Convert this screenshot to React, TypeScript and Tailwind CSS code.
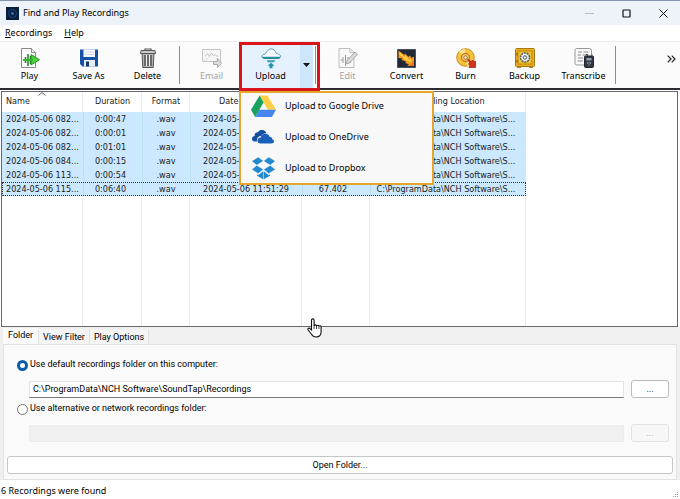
import React from 'react';

interface Recording {
  name: string;
  duration: string;
  date: string;
  size: string;
}

const recordings: Recording[] = [
  { name: '2024-05-06 082...', duration: '0:00:47', date: '2024-05-06 08:21:10', size: '7.911' },
  { name: '2024-05-06 082...', duration: '0:00:01', date: '2024-05-06 08:24:02', size: '0.168' },
  { name: '2024-05-06 082...', duration: '0:01:01', date: '2024-05-06 08:27:45', size: '10.268' },
  { name: '2024-05-06 084...', duration: '0:00:15', date: '2024-05-06 08:41:33', size: '2.525' },
  { name: '2024-05-06 113...', duration: '0:00:54', date: '2024-05-06 11:36:08', size: '9.090' },
  { name: '2024-05-06 115...', duration: '0:06:40', date: '2024-05-06 11:51:29', size: '67.402' },
];

const LOCATION = 'C:\\ProgramData\\NCH Software\\S...';

const PlayIcon = () => (
  <svg width="20" height="20" viewBox="0 0 20 20">
    <path d="M1.5.5h10l4 4v15h-14z" fill="#fff" stroke="#888" />
    <path d="M11.5.5v4h4" fill="#eee" stroke="#888" />
    <path d="M3 12h2M5.500 9v6M8 6v12M10.500 8v8" stroke="#187a1c" strokeWidth="1.500" />
    <path d="M11 6.500l8.500 5.200-8.500 5.300z" fill="#4fd13c" stroke="#188c1b" strokeWidth=".9" />
    <path d="M4 12h9" stroke="#2fb52c" strokeWidth="2" />
  </svg>
);

const SaveIcon = () => (
  <svg width="20" height="20" viewBox="0 0 20 20">
    <path d="M1 1.500h18v17H3.500L1 16z" fill="#1553a8" />
    <path d="M4.500 1.500h11.500v7.500H4.500z" fill="#fff" />
    <path d="M5.500 4h9.500M5.500 6.500h9.500" stroke="#c8d6e8" />
    <path d="M5 12h11v6.500H5z" fill="#e9eef5" />
    <path d="M7 13.500h3v5H7z" fill="#12366f" />
  </svg>
);

const DeleteIcon = () => (
  <svg width="20" height="20" viewBox="0 0 20 20">
    <path d="M7 2.500V1h6v1.500" fill="none" stroke="#555" strokeWidth="1.200" />
    <path d="M3 2.500h14l.5 3h-15z" fill="#c9c9c9" stroke="#555" />
    <path d="M4 5.500h12l-.8 14H4.800z" fill="#b5b5b5" stroke="#555" />
    <path d="M7 7v11M10 7v11M13 7v11" stroke="#4d4d4d" strokeWidth="1.400" />
    <path d="M8.500 7v11M11.500 7v11" stroke="#f1f1f1" />
  </svg>
);

const EmailIcon = () => (
  <svg width="20" height="20" viewBox="0 0 20 20" fill="none" stroke="#c4c4c4">
    <path d="M.5 1.500h18v12h-18z" fill="#f6f6f6" />
    <path d="M3 8l1-.5 1.500-2 2 3 2-3.500 2 3 1.500-1.500 1.500 1.500h1.500" />
    <path d="M2 13l5-3.500M17 13l-3-2" stroke="#d9d9d9" />
    <path d="M11.500 13.500h4v-3l4 4.800-4 4.200v-3h-4z" fill="#ddd" stroke="#aaa" />
  </svg>
);

const UploadIcon = () => (
  <svg width="22" height="21" viewBox="0 0 22 21">
    <path d="M3.500 10C2 9.800 1.300 8.500 2.300 7.400c.8-.9 2-1.300 3.200-1.500C6.600 3.400 8.800.8 11.200.8c2.500 0 4.400 2.200 5.100 4.700 1.700.3 3.200.9 4 1.900.8 1.200 0 2.400-1.500 2.600z" fill="#fbfeff" stroke="#5b9dad" />
    <path d="M2 8.800h18.500c-.4 1.400-1.400 2.200-3 2.200h-13c-1.400 0-2.300-.9-2.500-2.200z" fill="#2a8ba1" />
    <path d="M6.500 12.300h9l-1.500 2H8z" fill="#379cb0" />
    <path d="M11 14.700l3.500 3-2 .1v2.500h-3v-2.500l-2-.1z" fill="#2492aa" />
  </svg>
);

const EditIcon = () => (
  <svg width="20" height="20" viewBox="0 0 20 20" fill="none" stroke="#bdbdbd">
    <path d="M1 .5h11l4 4v15H1z" fill="#f8f8f8" />
    <path d="M12 .5v4h4" />
    <path d="M2.500 12h2M5 9v6M7.500 7v11M10 9v7M12.500 10v5" stroke="#999" />
    <path d="M9 12.500L17 4l2.500 2.200-8 8.800-3 .8z" fill="#d9d9d9" stroke="#a8a8a8" />
  </svg>
);

const ConvertIcon = () => (
  <svg width="19" height="19" viewBox="0 0 19 19">
    <path d="M.5.500h18v18H.5z" fill="#222936" stroke="#46505e" />
    <path d="M1.500 1.500l6 4.500.5-1.500 3.500 3.500 1.500-1.500 1.500 2.500L17 7.500V17h-7l2-1.500L8.500 14l.5-1.500L4.500 11l1-1.500L1.500 9z" fill="#f39a20" />
    <path d="M2.500 3l5.500 5 .5-1.500 4 4.500 1.500-1 .5 3.500-4-2-.5 1-4-3 .5-1L2.500 6z" fill="#ffcf43" />
    <path d="M17 10v7h-6l2.500-1.500L15 14z" fill="#ee7620" />
  </svg>
);

const BurnIcon = () => (
  <svg width="20" height="20" viewBox="0 0 20 20">
    <circle cx="9.500" cy="9.500" r="8.800" fill="#f5c43f" stroke="#c98b1d" />
    <path d="M9.500 9.500L3 3.500A9 9 0 0 1 9 1zM9.500 9.500l7 5.500a9 9 0 0 1-5 3z" fill="#ffe58c" />
    <circle cx="9.500" cy="9.500" r="4" fill="#f9d980" stroke="#ca7c18" strokeWidth="1.400" />
    <circle cx="9.500" cy="9.500" r="1.700" fill="#fff" stroke="#a45c10" />
    <path d="M11.500 11l3.500 2.500 1.500-1.500 1 1.500 2-.5v6.500h-6.500l1-2-1.500-1.500 1-1.500z" fill="#d4321c" stroke="#92200f" strokeWidth=".7" />
  </svg>
);

const BackupIcon = () => (
  <svg width="20" height="20" viewBox="0 0 20 20">
    <path d="M2 18h4v1.800H2zM14 18h4v1.800h-4z" fill="#8b6410" />
    <rect x=".5" y=".5" width="19" height="18" rx="1" fill="#e9ae1e" stroke="#a87810" />
    <rect x="3" y="3" width="14" height="13" fill="#f2c12f" stroke="#bb8612" />
    <circle cx="10" cy="9.500" r="4.500" fill="#e8edf0" stroke="#555d62" strokeWidth="1.500" strokeDasharray="2 .8" />
    <circle cx="10" cy="9.500" r="1.700" fill="#fff" stroke="#48525a" />
    <path d="M2 5v2.500M2 12v2.500" stroke="#735008" />
  </svg>
);

const TranscribeIcon = () => (
  <svg width="20" height="20" viewBox="0 0 20 20">
    <path d="M2.500.5h13a2 2 0 0 1 2 2V17H3a2 2 0 0 1-2-2V2.500a2 2 0 0 1 1.500-2z" fill="#fafafa" stroke="#999" />
    <path d="M4 4h4M9.500 4H14M3.500 7H7M8.500 7h6M4 10h5M3.500 13H9" stroke="#888" />
    <rect x="10.500" y="8" width="9" height="11.500" rx="1" fill="#333744" stroke="#22252e" />
    <path d="M12.500 10h5v2.500h-5z" fill="#97a1b5" />
    <path d="M13 15h1M14.500 15h1M16 15h1M14.500 17h1" stroke="#d2d6df" />
    <path d="M12 6.500h1.500V8M18 6.500V8" stroke="#444" fill="none" />
  </svg>
);

const DriveIcon = () => (
  <svg width="25" height="23" viewBox="0 0 26 23">
    <path d="M9 0h8l9 15h-8.500z" fill="#ffcf48" />
    <path d="M8.500 15H26l-4.200 7.500H4.200z" fill="#4587ef" />
    <path d="M9 0l4.100 7.300L4.200 22.500 0 15z" fill="#18a15f" />
  </svg>
);

const OneDriveIcon = () => (
  <svg width="22" height="14" viewBox="0 0 22 14">
    <path d="M5 11.500H3C.8 11.500 0 10 0 8.700c0-1.600 1.200-2.700 2.700-2.800C2.300 3.500 4 1.900 6 2.200 7 .4 8.800 0 10.300.1c2.200.2 3.600 1.600 4.200 3.200-2.300-.3-4.200.7-5.100 2.700C6.600 5.800 4.500 7.800 5 11.500z" fill="#124f9e" />
    <path d="M8.500 13.500c-1.900 0-3-1.300-3-2.800 0-1.900 1.400-3.100 3.300-3.100.3-2.300 2.100-3.900 4.500-3.900 2.100 0 3.600 1.100 4.200 3 1.700 0 2.700 1 2.700 2.500 1.200.2 1.800 1 1.800 2.100 0 1.300-.9 2.200-2.400 2.200z" fill="#1a60ba" />
  </svg>
);

const DropboxIcon = () => (
  <svg width="25" height="23" viewBox="0 0 26 24" fill="#2389ce">
    <path d="M7.500 0L13 4.300 6 8.600.6 4.300zM18.500 0L13 4.300l7 4.300 5.400-4.300zM.6 13L6 8.600l7 4.400-5.500 4.400zM25.400 13L20 8.600 13 13l5.500 4.400z" stroke="#f8f8f8" strokeWidth=".6" />
    <path d="M6.200 18.200l1.300.9 5.200-4.200v8.300l-6.500-3.700zM19.800 18.200l-1.300.9-5.200-4.200v8.300l6.500-3.700z" />
  </svg>
);

interface ToolProps {
  label: string;
  icon: React.ReactNode;
  disabled?: boolean;
  active?: boolean;
}

const Tool: React.FC<ToolProps> = ({ label, icon, disabled, active }) => (
  <button
    disabled={disabled}
    className={`flex w-[59px] shrink-0 flex-col items-center pt-1.5 leading-4 ${active ? 'bg-[#e5f2fd]' : ''} ${disabled ? 'text-[#a3a3a3]' : 'text-black'}`}
  >
    <span className="flex h-5 items-center">{icon}</span>
    <span>{label}</span>
  </button>
);

const Separator = () => <span className="mx-0.5 my-1 w-px shrink-0 bg-[#8e8e8e]" />;

const uploadTargets = [
  { label: 'Upload to Google Drive', icon: <DriveIcon /> },
  { label: 'Upload to OneDrive', icon: <OneDriveIcon /> },
  { label: 'Upload to Dropbox', icon: <DropboxIcon /> },
];

const Toolbar = () => (
  <div className="flex h-[47px] border-t border-[#ececec] bg-[#fbfbfb] text-[9px]">
    <Tool label="Play" icon={<PlayIcon />} />
    <Tool label="Save As" icon={<SaveIcon />} />
    <Tool label="Delete" icon={<DeleteIcon />} />
    <Separator />
    <Tool label="Email" icon={<EmailIcon />} disabled />
    <div className="relative flex shrink-0">
      <Tool label="Upload" icon={<UploadIcon />} active />
      <button aria-label="Upload options" className="flex w-[13px] items-center justify-center bg-[#cce6fb]">
        <svg width="7" height="4" viewBox="0 0 7 4"><path d="M0 0h7L3.500 4z" fill="#111" /></svg>
      </button>
      <div className="pointer-events-none absolute top-0 -right-[7px] -bottom-[3px] -left-0.5 z-20 border-[3px] border-[#d9141c]" />
      {/* Upload drop-down */}
      <div role="menu" className="absolute top-[49px] -left-0.5 z-10 flex w-[195px] flex-col gap-[3px] border-2 border-[#e5a62b] bg-[#f8f8f8]">
        {uploadTargets.map((target) => (
          <button key={target.label} role="menuitem" className="flex h-7 items-center gap-2 pb-0.5 pl-2 text-black">
            <span className="flex w-7 justify-center">{target.icon}</span>
            {target.label}
          </button>
        ))}
      </div>
    </div>
    <Separator />
    <Tool label="Edit" icon={<EditIcon />} disabled />
    <Tool label="Convert" icon={<ConvertIcon />} />
    <Tool label="Burn" icon={<BurnIcon />} />
    <Tool label="Backup" icon={<BackupIcon />} />
    <Tool label="Transcribe" icon={<TranscribeIcon />} />
    <Separator />
    <button aria-label="More tools" className="ml-auto flex items-center pr-1 pb-7 pt-4">
      <svg width="9" height="8" viewBox="0 0 9 8" fill="none" stroke="#222" strokeWidth="1.200"><path d="M.7.700L4 4 .7 7.300M4.700.700L8 4 4.700 7.300" /></svg>
    </button>
  </div>
);

const RecordingList = () => (
  <div className="relative ml-px mr-0.5 flex flex-1 flex-col border border-[#696969] bg-white">
    {/* column lines run down to the bottom of the list */}
    <div className="absolute inset-0 flex">
      <div className="w-[81px] border-r border-[#ececec]" />
      <div className="w-[59px] border-r border-[#ececec]" />
      <div className="w-12 border-r border-[#ececec]" />
      <div className="w-28 border-r border-[#ececec]" />
      <div className="w-17 border-r border-[#ececec]" />
      <div className="w-39 border-r border-[#ececec]" />
    </div>
    <table className="relative w-[524px] table-fixed border-collapse font-['DejaVu_Sans_Condensed','DejaVu_Sans',sans-serif] text-[9px] text-[#1b1b1b]">
      <colgroup>
        <col className="w-[81px]" />
        <col className="w-[59px]" />
        <col className="w-12" />
        <col className="w-28" />
        <col className="w-17" />
        <col className="w-39" />
      </colgroup>
      <thead>
        <tr className="h-5 whitespace-nowrap">
          <th className="relative p-0 pl-1 text-left font-normal">
            Name
            <svg className="absolute top-0 left-9" width="8" height="4" viewBox="0 0 8 4" fill="none" stroke="#666"><path d="M.5 3.500L4 .5l3.500 3" /></svg>
          </th>
          <th className="p-0 font-normal">Duration</th>
          <th className="p-0 font-normal">Format</th>
          <th className="p-0 font-normal">Date Created</th>
          <th className="p-0 font-normal">Size</th>
          <th className="p-0 pr-1 font-normal">Recording Location</th>
        </tr>
      </thead>
      <tbody>
        {recordings.map((rec, idx) => (
          <tr
            key={idx}
            className={`h-3.5 bg-[#cce8ff] text-center leading-3 whitespace-nowrap ${idx === recordings.length - 1 ? 'outline-1 -outline-offset-1 outline-dotted outline-[#333]' : ''}`}
          >
            <td className="border-r border-[#bcdff8] p-0 pl-1 text-left">{rec.name}</td>
            <td className="border-r border-[#bcdff8] p-0 pr-1">{rec.duration}</td>
            <td className="border-r border-[#bcdff8] p-0">.wav</td>
            <td className="border-r border-[#bcdff8] p-0">{rec.date}</td>
            <td className="border-r border-[#bcdff8] p-0 pr-1.5">{rec.size}</td>
            <td className="p-0 pl-1.5 text-left">{LOCATION}</td>
          </tr>
        ))}
      </tbody>
    </table>
    {/* hand pointer */}
    <svg className="absolute -bottom-3 left-[305px] z-10" width="16" height="20" viewBox="0 0 16 20">
      <path d="M4.500 12V2.200c0-1.800 2.600-1.800 2.600 0V8c0-1.500 2.400-1.500 2.400.2 0-1.400 2.400-1.300 2.400.4 0-1.200 2.200-1.100 2.200.6v4.600c0 2.900-1.700 5.200-5 5.200-2.600 0-3.700-1.200-4.800-3L1.200 12c-.9-1.500 1-2.500 1.900-1.300z" fill="#fff" stroke="#111" strokeWidth="1.100" />
      <path d="M7.100 7.500V11M9.500 8v3M11.900 8.500V11" stroke="#111" strokeWidth=".8" />
    </svg>
  </div>
);

const SettingsPanel = () => (
  <div className="bg-[#f0f0f0] px-[3px] pt-px font-[Roboto,'Noto_Sans',sans-serif]">
    <div role="tablist" className="flex h-4 items-end">
      <button role="tab" aria-selected="true" className="h-4 bg-[#fafafa] px-[5px] pb-0.5 leading-3">Folder</button>
      <button role="tab" aria-selected="false" className="h-3.5 border-x border-[#e2e2e2] bg-[#f4f4f4] px-1 leading-3">View Filter</button>
      <button role="tab" aria-selected="false" className="h-3.5 border-r border-[#e2e2e2] bg-[#f4f4f4] px-1 leading-3">Play Options</button>
    </div>
    <div className="flex flex-col border border-[#e2e2e2] bg-[#fafafa] px-[3px] pt-3.5 pb-[5px]">
      <label className="flex h-3 items-center gap-0.5 pl-2.5">
        <input type="radio" name="folder" defaultChecked className="size-[11px] appearance-none rounded-full border border-[#777] bg-white checked:border-[3px] checked:border-[#0b5cad]" />
        Use default recordings folder on this computer:
      </label>
      <div className="mt-[9px] flex items-center gap-[7px] pr-1 pl-[22px]">
        <input
          aria-label="Default recordings folder"
          defaultValue="C:\ProgramData\NCH Software\SoundTap\Recordings"
          className="h-[17px] min-w-0 flex-1 border border-b-[#777] border-[#e3e3e3] bg-white px-[3px]"
        />
        <button aria-label="Browse default folder" className="h-[18px] w-[38px] rounded-[3px] border border-[#bbb] bg-white leading-3">...</button>
      </div>
      <label className="mt-[5px] flex h-3 items-center gap-0.5 pl-2.5">
        <input type="radio" name="folder" className="size-[11px] appearance-none rounded-full border border-[#777] bg-white" />
        Use alternative or network recordings folder:
      </label>
      <div className="mt-[9px] flex items-center gap-[7px] pr-1 pl-[22px]">
        <input aria-label="Alternative recordings folder" disabled className="h-[17px] min-w-0 flex-1 border border-[#ececec] bg-[#f0f0f0] px-[3px]" />
        <button disabled aria-label="Browse alternative folder" className="h-[18px] w-[38px] rounded-[3px] border border-[#e2e2e2] bg-[#f7f7f7] leading-3 text-[#999]">...</button>
      </div>
      <button className="mt-3.5 h-[18px] rounded-[3px] border border-[#c6c6c6] bg-white leading-3">Open Folder...</button>
    </div>
  </div>
);

export default function App() {
  return (
    <div className="flex min-h-screen flex-col bg-white font-['Noto_Sans',sans-serif] text-[9px] text-black">
      <header className="flex h-[25px] items-center border-t border-[#8394ae] bg-[#eef3f9] pl-1.5">
        <svg width="13" height="13" viewBox="0 0 13 13">
          <path d="M0 0h13v13H0z" fill="#0b1f3d" />
          <circle cx="6.500" cy="6.500" r="4" fill="none" stroke="#17457f" />
          <circle cx="6.500" cy="6.500" r="1.500" fill="#2f74bd" />
        </svg>
        <h1 className="ml-1 flex-1">Find and Play Recordings</h1>
        <div className="flex items-center gap-7 pr-3">
          <button aria-label="Minimize"><svg width="9" height="9" viewBox="0 0 9 9" stroke="#b8bdc4"><path d="M0 4.500h9" /></svg></button>
          <button aria-label="Maximize"><svg width="9" height="9" viewBox="0 0 9 9" fill="none" stroke="#111" strokeWidth="1.200"><rect x="1" y="1" width="7" height="7" rx=".5" /></svg></button>
          <button aria-label="Close"><svg width="9" height="9" viewBox="0 0 9 9" stroke="#111"><path d="M.5.500l8 8M8.500.500l-8 8" /></svg></button>
        </div>
      </header>
      <nav className="flex h-4 items-center gap-3 pl-[5px]">
        <button><u>R</u>ecordings</button>
        <button><u>H</u>elp</button>
      </nav>
      <Toolbar />
      <div className="mb-px h-0.5 bg-[#2c2c30]" />
      <RecordingList />
      <SettingsPanel />
      <footer className="flex h-[19px] items-center justify-between pt-0.5 pl-px">
        <span>6 Recordings were found</span>
        <svg className="self-end" width="8" height="8" viewBox="0 0 8 8" fill="#999"><path d="M5 1h1v1H5zM3 3h1v1H3zM5 3h1v1H5zM1 5h1v1H1zM3 5h1v1H3zM5 5h1v1H5z" /></svg>
      </footer>
    </div>
  );
}
